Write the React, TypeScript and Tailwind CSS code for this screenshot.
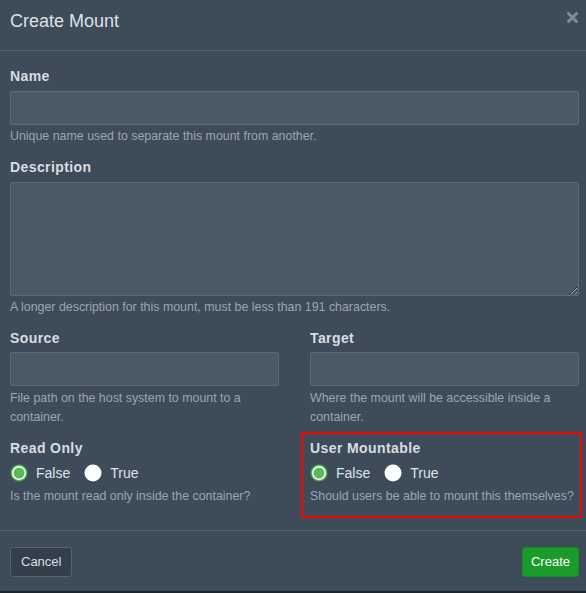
import React from "react";

function Radio({ checked, label }: { checked: boolean; label: string }) {
  return (
    <label className="flex items-center mr-[14px]">
      {checked ? (
        <svg width="18" height="18" viewBox="0 0 18 18" className="mr-[8px]">
          <circle cx="9" cy="9" r="8.5" fill="#4caf50" />
          <circle cx="9" cy="9" r="7" fill="#ffffff" />
          <circle cx="9" cy="9" r="5.5" fill="#5cb85c" />
        </svg>
      ) : (
        <svg width="18" height="18" viewBox="0 0 18 18" className="mr-[8px]">
          <circle cx="9" cy="9" r="8.5" fill="#ffffff" />
        </svg>
      )}
      <span className="text-[14px] text-[#dfe4e9]">{label}</span>
    </label>
  );
}

function Label({ children }: { children: React.ReactNode }) {
  return (
    <div className="text-[14px] leading-[18px] font-bold tracking-[0.4px] text-[#d8dde3]">{children}</div>
  );
}

function Help({ children }: { children: React.ReactNode }) {
  return <div className="text-[12.4px] leading-[19px] text-[#9ba6b2]">{children}</div>;
}

const inputCls =
  "block w-full h-[34px] bg-[#4b5967] border border-[#5c6a78] rounded-[2px] outline-none";

export default function App() {
  return (
    <div className="w-[586px] h-[593px] bg-[#3e4b58] flex flex-col" style={{ fontFamily: '"Liberation Sans", Arial, sans-serif' }}>
      {/* header */}
      <div className="h-[51px] border-b border-[#52606d] flex items-start justify-between pl-[10px] pr-[8px]">
        <h1 className="mt-[10px] text-[18px] leading-[22px] text-[#dde2e7]">Create Mount</h1>
        <svg width="11" height="11" viewBox="0 0 11 11" className="mt-[12px]">
          <path d="M1.5 1.5 L9.5 9.5 M9.5 1.5 L1.5 9.5" stroke="#7e8b98" strokeWidth="3" strokeLinecap="round" />
        </svg>
      </div>

      {/* body */}
      <div className="flex-1 pl-[10px] pr-[7px] pt-[16px]">
        <Label>Name</Label>
        <input className={inputCls + " mt-[6px]"} />
        <div className="mt-[2px]">
          <Help>Unique name used to separate this mount from another.</Help>
        </div>

        <div className="mt-[12px]">
          <Label>Description</Label>
        </div>
        <textarea className="block w-full h-[114px] mt-[6px] bg-[#4b5967] border border-[#5c6a78] rounded-[2px] outline-none resize-y" />
        <div className="mt-[2px]">
          <Help>A longer description for this mount, must be less than 191 characters.</Help>
        </div>

        <div className="grid grid-cols-2 gap-x-[31px] mt-[12px]">
          <div>
            <Label>Source</Label>
            <input className={inputCls + " mt-[5px]"} />
            <div className="mt-[3px]">
              <Help>File path on the host system to mount to a container.</Help>
            </div>
          </div>
          <div>
            <Label>Target</Label>
            <input className={inputCls + " mt-[5px]"} />
            <div className="mt-[3px]">
              <Help>Where the mount will be accessible inside a container.</Help>
            </div>
          </div>

          <div className="mt-[12px]">
            <Label>Read Only</Label>
            <div className="flex items-center h-[20px] mt-[6px]">
              <Radio checked label="False" />
              <Radio checked={false} label="True" />
            </div>
            <div className="mt-[4px]">
              <Help>Is the mount read only inside the container?</Help>
            </div>
          </div>
          <div className="mt-[12px] relative">
            <Label>User Mountable</Label>
            <div className="flex items-center h-[20px] mt-[6px]">
              <Radio checked label="False" />
              <Radio checked={false} label="True" />
            </div>
            <div className="mt-[4px]">
              <Help>Should users be able to mount this themselves?</Help>
            </div>
            <div className="absolute left-[-9px] top-[-7px] w-[281px] h-[86px] border-2 border-[#ff0000] pointer-events-none" />
          </div>
        </div>
      </div>

      {/* footer */}
      <div className="h-[61px] border-t border-[#52606d] flex items-start justify-between pl-[10px] pr-[7px] pt-[16px]">
        <button className="h-[30px] px-[10px] bg-[#33404c] border border-[#56636f] rounded-[3px] text-[13px] text-[#d8dde3]">
          Cancel
        </button>
        <button className="h-[30px] px-[8px] bg-[#1a9c2a] border border-[#178a25] rounded-[3px] text-[13px] text-white">
          Create
        </button>
      </div>
      <div className="h-[2px] bg-[#1c242c]" />
    </div>
  );
}
